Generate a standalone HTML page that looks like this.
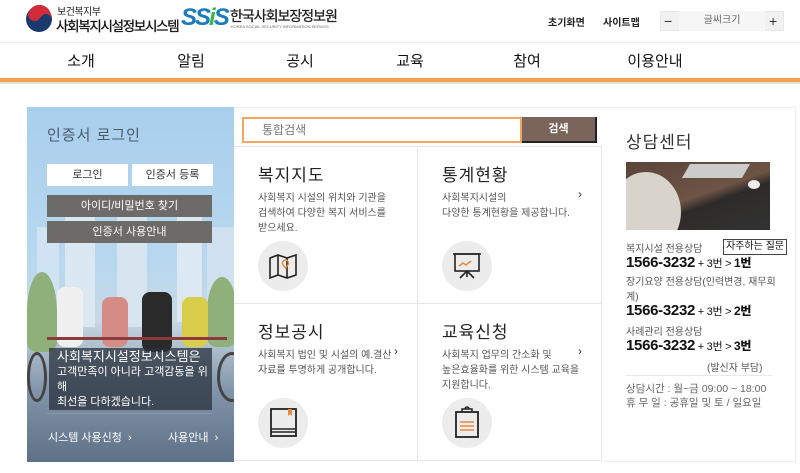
<!DOCTYPE html>
<html><head><meta charset="utf-8"><style>
*{margin:0;padding:0;box-sizing:border-box}
body{width:800px;height:473px;background:#fff;font-family:"Liberation Sans","Noto Sans CJK KR",sans-serif;position:relative;overflow:hidden;color:#333}
.a{position:absolute}
.nav span{position:absolute;top:50px;font-size:15px;color:#111;transform:translateX(-50%)}
.cell{position:absolute;width:184px;height:157px;border-right:1px solid #e6e6e6;border-bottom:1px solid #e6e6e6}
.cell h3{position:absolute;left:24px;top:14px;font-size:17px;font-weight:normal;color:#222;letter-spacing:1px}
.cell p{position:absolute;left:24px;top:44px;font-size:10px;line-height:15px;color:#555}
.cell .ic{position:absolute;left:24px;top:94px;width:50px;height:50px;border-radius:50%;background:#ececec}
.cell .ar{position:absolute;left:160px;top:40px;font-size:12px;color:#333}
.btn{position:absolute;font-size:11px;text-align:center;line-height:22px}
.num{font-size:15px;color:#111;font-weight:bold;letter-spacing:-.3px}
.num small{font-size:11px;font-weight:normal}
.num b{font-size:12px}
</style></head><body>
<!-- header -->
<svg class="a" style="left:25px;top:5px" width="28" height="28" viewBox="0 0 28 28"><circle cx="14" cy="14" r="13" fill="#1a3a6e"/><path d="M3 10a11.5 11.5 0 0 1 23 3c-1-4-5-5-8-3s-4 6-8 6-6-2-7-6z" fill="#d22b3a"/></svg>
<div class="a" style="left:57px;top:3px;font-size:10px;color:#222;letter-spacing:-.5px">보건복지부</div>
<div class="a" style="left:56px;top:15px;font-size:13.5px;color:#111;letter-spacing:-1.3px;-webkit-text-stroke:.3px #111">사회복지시설정보시스템</div>
<div class="a" style="left:181px;top:5px;font-size:24px;font-weight:bold;font-style:italic;color:#1a7bbf;letter-spacing:-2px;line-height:26px">SS<span style="color:#3cb54a">i</span>S</div>
<div class="a" style="left:230px;top:6px;font-size:14px;color:#222;letter-spacing:-1px;-webkit-text-stroke:.3px #222">한국사회보장정보원</div>
<div class="a" style="left:231px;top:24px;font-size:4px;color:#666">KOREA SOCIAL SECURITY INFORMATION SERVICE</div>
<div class="a" style="left:548px;top:14px;font-size:10px;color:#222;font-weight:bold">초기화면</div>
<div class="a" style="left:603px;top:14px;font-size:10px;color:#222;font-weight:bold">사이트맵</div>
<div class="a" style="left:660px;top:11px;width:124px;height:20px;background:#f1f1f1;border:1px solid #e8e8e8"></div>
<div class="a" style="left:679px;top:11px;width:86px;height:20px;background:#f6f6f6;font-size:10px;color:#666;text-align:center;line-height:20px">글씨크기</div>
<div class="a" style="left:664px;top:11px;font-size:14px;line-height:20px;color:#333">−</div>
<div class="a" style="left:769px;top:11px;font-size:14px;line-height:20px;color:#333">+</div>
<div class="a" style="left:0;top:42px;width:800px;height:1px;background:#eee"></div>
<div class="nav"><span style="left:81px">소개</span><span style="left:191px">알림</span><span style="left:300px">공시</span><span style="left:410px">교육</span><span style="left:527px">참여</span><span style="left:655px">이용안내</span></div>
<div class="a" style="left:0;top:78px;width:800px;height:4px;background:#f8a354"></div>
<div class="a" style="left:0;top:82px;width:800px;height:2px;background:#e7e2dc"></div>
<!-- left panel -->
<div class="a" style="left:27px;top:107px;width:207px;height:355px;background:linear-gradient(#a9cfee 0,#b8d8ef 45%,#c9d9e4 60%,#8194a9 80%,#5e7187 100%);overflow:hidden">
 <div class="a" style="left:10px;top:120px;width:22px;height:90px;background:#cfe3f2"></div>
 <div class="a" style="left:38px;top:100px;width:30px;height:120px;background:#dbe8f2"></div>
 <div class="a" style="left:90px;top:110px;width:30px;height:110px;background:#d6e5f0"></div>
 <div class="a" style="left:150px;top:95px;width:25px;height:120px;background:#dde9f2"></div>
 <div class="a" style="left:180px;top:120px;width:27px;height:100px;background:#cfe0ee"></div>
 <div class="a" style="left:0;top:165px;width:30px;height:80px;border-radius:50% 50% 10px 10px;background:#8fb07a"></div>
 <div class="a" style="left:180px;top:170px;width:30px;height:70px;border-radius:50% 50% 10px 10px;background:#8fb07a"></div>
 <div class="a" style="left:30px;top:180px;width:26px;height:60px;background:#f0f0f0;border-radius:8px"></div>
 <div class="a" style="left:75px;top:190px;width:26px;height:50px;background:#d58c86;border-radius:8px"></div>
 <div class="a" style="left:115px;top:185px;width:30px;height:60px;background:#2a2a2a;border-radius:8px"></div>
 <div class="a" style="left:155px;top:190px;width:26px;height:50px;background:#d9cd4a;border-radius:8px"></div>
 <div class="a" style="left:20px;top:230px;width:180px;height:3px;background:#8b3b3b"></div>
 <div class="a" style="left:0;top:245px;width:20px;height:50px;border:3px solid #444;border-radius:50%"></div>
 <div class="a" style="left:190px;top:245px;width:30px;height:50px;border:3px solid #444;border-radius:50%"></div>
 <div class="a" style="left:20px;top:17px;font-size:15px;color:#4a5a6a;letter-spacing:1px">인증서 로그인</div>
 <div class="btn" style="left:20px;top:57px;width:81px;background:#fff;color:#333">로그인</div>
 <div class="btn" style="left:105px;top:57px;width:81px;background:#fff;color:#333">인증서 등록</div>
 <div class="btn" style="left:20px;top:88px;width:165px;background:#6d6b68;color:#fff">아이디/비밀번호 찾기</div>
 <div class="btn" style="left:20px;top:114px;width:165px;background:#6d6b68;color:#fff">인증서 사용안내</div>
 <div class="a" style="left:22px;top:241px;width:163px;height:62px;background:rgba(40,50,60,.75)"></div>
 <div class="a" style="left:30px;top:243px;font-size:13px;color:#fff;line-height:14px">사회복지시설정보시스템은<br><span style="font-size:11px;line-height:13px">고객만족이 아니라 고객감동을 위<br>해<br>최선을 다하겠습니다.</span></div>
 <div class="a" style="left:20px;top:306px;width:165px;height:1px;background:#8a99a8"></div>
 <div class="a" style="left:21px;top:322px;font-size:11px;color:#fff">시스템 사용신청 &nbsp;›</div>
 <div class="a" style="left:141px;top:322px;font-size:11px;color:#fff">사용안내 &nbsp;›</div>
</div>
<!-- search -->
<div class="a" style="left:234px;top:107px;width:368px;height:1px;background:#eee"></div>
<div class="a" style="left:242px;top:117px;width:280px;height:26px;border:2px solid #f2a55e;background:#fff"></div>
<div class="a" style="left:262px;top:121px;font-size:12px;color:#777">통합검색</div>
<div class="a" style="left:522px;top:117px;width:75px;height:26px;background:#7b6459;border-right:2px solid #222;border-bottom:2px solid #222;color:#fff;font-size:11px;font-weight:bold;text-align:center;line-height:25px">검색</div>
<div class="a" style="left:234px;top:146px;width:368px;height:1px;background:#e6e6e6"></div>
<div class="cell" style="left:234px;top:147px"><h3>복지지도</h3><p>사회복지 시설의 위치와 기관을<br>검색하여 다양한 복지 서비스를<br>받으세요.</p>
<div class="ic"><svg width="50" height="50" viewBox="0 0 50 50"><path d="M12 17l8-3 9 3 9-3v20l-9 3-9-3-8 3z M20 14v20 M29 17v20" fill="none" stroke="#222" stroke-width="1.6"/><path d="M24.5 22a3 3 0 0 1 6 0c0 2-3 5-3 5s-3-3-3-5z" fill="none" stroke="#e8883a" stroke-width="1.4"/></svg></div></div>
<div class="cell" style="left:418px;top:147px"><h3>통계현황</h3><p>사회복지시설의<br>다양한 통계현황을 제공합니다.</p><span class="ar">›</span>
<div class="ic"><svg width="50" height="50" viewBox="0 0 50 50"><rect x="13" y="13" width="24" height="17" fill="none" stroke="#222" stroke-width="1.6"/><path d="M11 13h28M25 30v6M18 37l7-7 7 7" stroke="#222" stroke-width="1.6" fill="none"/><path d="M17 25l4-3 3 2 5-4" stroke="#e8883a" stroke-width="1.5" fill="none"/></svg></div></div>
<div class="cell" style="left:234px;top:304px"><h3>정보공시</h3><p>사회복지 법인 및 시설의 예.결산<br>자료를 투명하게 공개합니다.</p><span class="ar">›</span>
<div class="ic"><svg width="50" height="50" viewBox="0 0 50 50"><rect x="13" y="11" width="25" height="27" fill="none" stroke="#222" stroke-width="1.8"/><path d="M13 31h25M13 34h25" stroke="#222" stroke-width="1.4"/><path d="M30 11v7l2-2 2 2v-7" fill="#e8883a"/></svg></div></div>
<div class="cell" style="left:418px;top:304px"><h3>교육신청</h3><p>사회복지 업무의 간소화 및<br>높은효율화를 위한 시스템 교육을<br>지원합니다.</p><span class="ar">›</span>
<div class="ic"><svg width="50" height="50" viewBox="0 0 50 50"><rect x="14" y="14" width="22" height="25" fill="none" stroke="#222" stroke-width="1.8"/><path d="M20 14v-3h10v3M23 11a2 2 0 0 1 4 0" stroke="#222" stroke-width="1.5" fill="none"/><path d="M18 24h14M18 28h14M18 32h14" stroke="#e8883a" stroke-width="1.5"/></svg></div></div>
<!-- right -->
<div class="a" style="left:602px;top:107px;width:194px;height:355px;border:1px solid #eee;border-left:none"></div>
<div class="a" style="left:626px;top:128px;font-size:17px;color:#333;letter-spacing:1px">상담센터</div>
<div class="a" style="left:626px;top:162px;width:144px;height:68px;background:linear-gradient(160deg,#5a4438 0,#6d5445 50%,#2d2b2a 60%,#333 100%);overflow:hidden">
 <div class="a" style="left:-15px;top:10px;width:70px;height:80px;border-radius:50%;background:#d8d4cc"></div>
 <div class="a" style="left:60px;top:2px;width:60px;height:14px;background:#ccc;transform:skewX(-30deg)"></div>
 <div class="a" style="left:122px;top:18px;width:12px;height:9px;border-radius:50%;background:#eee"></div>
</div>
<div class="a" style="left:626px;top:240px;font-size:10px;color:#555">복지시설 전용상담</div>
<div class="a" style="left:723px;top:239px;border:1px solid #444;font-size:10px;padding:0 2px;line-height:14px;color:#111;background:#fff">자주하는 질문</div>
<div class="a num" style="left:626px;top:254px">1566-3232<small> + 3번 &gt; </small><b>1번</b></div>
<div class="a" style="left:626px;top:275px;font-size:10px;color:#555;line-height:15px">장기요양 전용상담(인력변경, 재무회<br>계)</div>
<div class="a num" style="left:626px;top:302px">1566-3232<small> + 3번 &gt; </small><b>2번</b></div>
<div class="a" style="left:626px;top:323px;font-size:10px;color:#555">사례관리 전용상담</div>
<div class="a num" style="left:626px;top:337px">1566-3232<small> + 3번 &gt; </small><b>3번</b></div>
<div class="a" style="left:707px;top:359px;font-size:10px;color:#555">(발신자 부담)</div>
<div class="a" style="left:626px;top:375px;width:146px;height:1px;background:#e8e8e8"></div>
<div class="a" style="left:626px;top:382px;font-size:10.5px;color:#666;line-height:14px">상담시간 : 월~금 09:00 ~ 18:00<br>휴 무 일 : 공휴일 및 토 / 일요일</div>
</body></html>
